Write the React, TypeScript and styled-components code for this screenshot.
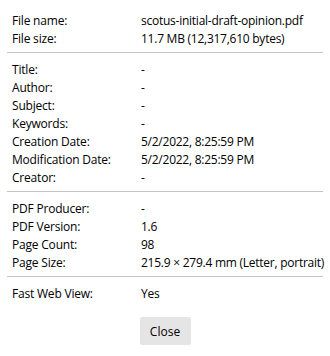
import * as React from 'react'
import styled, { createGlobalStyle } from 'styled-components'

const GlobalStyle = createGlobalStyle`
  html, body {
    margin: 0;
    padding: 0;
    background: #fff;
  }
  body {
    font-family: 'Open Sans', 'Noto Sans', sans-serif;
    font-size: 12px;
    color: #000;
  }
`

const Dialog = styled.div`
  width: 330px;
  height: 356px;
  box-sizing: border-box;
  padding: 12px 7px 0 7px;
  display: flex;
  flex-direction: column;
`

const Section = styled.div`
  display: flex;
  flex-direction: column;
`

const Row = styled.div`
  display: grid;
  grid-template-columns: 129px 1fr;
  height: 18px;
  line-height: 18px;
  padding-left: 5px;
  white-space: nowrap;
`

const Label = styled.span`
  letter-spacing: -0.2px;
`

const Value = styled.span`
  letter-spacing: -0.25px;
`

const Separator = styled.hr`
  border: none;
  border-top: 1px solid #c4c4c4;
  margin: 4px 0 8px 0;
  height: 0;
`

const Footer = styled.div`
  display: flex;
  justify-content: center;
  margin-top: 14px;
`

const Button = styled.button`
  width: 51px;
  height: 28px;
  border: none;
  border-radius: 2px;
  background: #e5e5e5;
  font-family: inherit;
  font-size: 12px;
  color: #000;
  padding: 0;
  cursor: pointer;
`

type Item = [string, string]

const sections: Item[][] = [
  [
    ['File name:', 'scotus-initial-draft-opinion.pdf'],
    ['File size:', '11.7 MB (12,317,610 bytes)'],
  ],
  [
    ['Title:', '-'],
    ['Author:', '-'],
    ['Subject:', '-'],
    ['Keywords:', '-'],
    ['Creation Date:', '5/2/2022, 8:25:59 PM'],
    ['Modification Date:', '5/2/2022, 8:25:59 PM'],
    ['Creator:', '-'],
  ],
  [
    ['PDF Producer:', '-'],
    ['PDF Version:', '1.6'],
    ['Page Count:', '98'],
    ['Page Size:', '215.9 × 279.4 mm (Letter, portrait)'],
  ],
  [
    ['Fast Web View:', 'Yes'],
  ],
]

const App: React.FC = () => {
  return (
    <>
      <GlobalStyle />
      <Dialog>
        {sections.map((items, i) => (
          <React.Fragment key={i}>
            {i > 0 && <Separator />}
            <Section>
              {items.map(([label, value]) => (
                <Row key={label}>
                  <Label>{label}</Label>
                  <Value>{value}</Value>
                </Row>
              ))}
            </Section>
          </React.Fragment>
        ))}
        <Footer>
          <Button>Close</Button>
        </Footer>
      </Dialog>
    </>
  )
}

export default App
